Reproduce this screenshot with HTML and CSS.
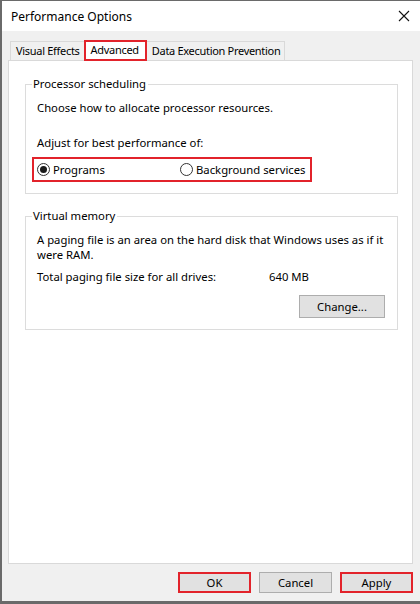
FILE: index.html
```html
<!DOCTYPE html>
<html>
<head>
<meta charset="utf-8">
<link rel="stylesheet" href="styles.css">
</head>
<body>
<div class="window">
  <div class="titlebar">
    <span class="title">Performance Options</span>
    <svg class="close" width="12" height="12" viewBox="0 0 12 12"><path d="M1 1 L11 11 M11 1 L1 11" stroke="#111" stroke-width="1.1" fill="none"/></svg>
  </div>
  <div class="client">
    <div class="tabs">
      <div class="tab">Visual Effects</div>
      <div class="tab active">Advanced</div>
      <div class="tab">Data Execution Prevention</div>
    </div>
    <div class="panel">
      <fieldset class="group g1">
        <legend>Processor scheduling</legend>
        <div class="gbody">
          <div class="line">Choose how to allocate processor resources.</div>
          <div class="line adjust">Adjust for best performance of:</div>
          <div class="radios">
            <label class="radio r1"><span class="dot checked"></span>Programs</label>
            <label class="radio r2"><span class="dot"></span>Background services</label>
          </div>
        </div>
      </fieldset>
      <fieldset class="group g2">
        <legend>Virtual memory</legend>
        <div class="gbody vm">
          <div class="para">A paging file is an area on the hard disk that Windows uses as if it<br>were RAM.</div>
          <div class="total"><span class="tlabel">Total paging file size for all drives:</span><span>640 MB</span></div>
          <div class="changerow"><div class="btn change">Change...</div></div>
        </div>
      </fieldset>
    </div>
    <div class="buttons">
      <div class="btn dlg marked">OK</div>
      <div class="btn dlg">Cancel</div>
      <div class="btn dlg marked">Apply</div>
    </div>
  </div>
</div>
</body>
</html>
```
FILE: styles.css
```css
* { box-sizing: border-box; }
html, body { margin: 0; padding: 0; }
body {
  width: 420px;
  height: 604px;
  overflow: hidden;
  font-family: "Noto Sans", "Open Sans", sans-serif;
  font-size: 11.3px;
  color: #000;
  background: #f0f0f0;
  white-space: nowrap;
}
.window {
  width: 420px;
  height: 604px;
  border-top: 1px solid #6a6a6a;
  border-left: 2px solid #6a6a6a;
  border-bottom: 3px solid #6a6a6a;
  display: flex;
  flex-direction: column;
  background: #f0f0f0;
}
.titlebar {
  height: 30px;
  background: #fff;
  display: flex;
  align-items: center;
  justify-content: space-between;
  padding: 2px 10px 0 9px;
  flex-shrink: 0;
}
.title { font-size: 12px; line-height: 16px; }
.close { display: block; margin-top: -2px; }
.client {
  flex: 1;
  display: flex;
  flex-direction: column;
  padding: 8px 7px 0 6px;
}
.tabs {
  display: flex;
  align-items: flex-end;
  height: 21px;
  padding-left: 2px;
  position: relative;
  z-index: 1;
}
.tab {
  height: 19px;
  border: 1px solid #d9d9d9;
  border-bottom: none;
  background: #f0f0f0;
  line-height: 18px;
  font-size: 11px;
  letter-spacing: -0.3px;
  padding: 0 4px 0 5px;
  margin-right: -1px;
}
.tab.active {
  height: 21px;
  background: #fff;
  border: 2px solid #e2232b;
  padding: 0 6px 0 5px;
  line-height: 16px;
  margin-bottom: -1px;
  position: relative;
  z-index: 2;
}
.panel {
  height: 504px;
  background: #fff;
  border: 1px solid #d9d9d9;
  padding: 0 14px 0 16px;
  display: flex;
  flex-direction: column;
}
.group {
  margin: 0;
  padding: 0;
  border: 1px solid #dcdcdc;
  min-width: 0;
}
.group legend {
  margin-left: 6px;
  padding: 0 2px 0 1px;
  line-height: 16px;
}
.g1 { margin-top: 15px; }
.g2 { margin-top: 14px; }
.gbody { padding: 8px 0 0 11px; }
.line { line-height: 16px; }
.adjust { margin-top: 19px; }
.radios {
  margin: 6px 0 11px -5px;
  width: 280px;
  height: 25px;
  border: 2px solid #e2232b;
  display: flex;
  align-items: center;
  padding-left: 3px;
}
.radio {
  display: flex;
  align-items: center;
  line-height: 16px;
}
.r1 { width: 143px; }
.dot {
  width: 13px;
  height: 13px;
  border: 1px solid #333;
  border-radius: 50%;
  margin-right: 3px;
  display: flex;
  align-items: center;
  justify-content: center;
  background: #fff;
}
.dot.checked::after {
  content: "";
  width: 7px;
  height: 7px;
  border-radius: 50%;
  background: #1a1a1a;
}
.vm { padding-top: 8px; }
.para { line-height: 15px; }
.total { margin-top: 7px; line-height: 16px; display: flex; }
.tlabel { width: 232px; }
.changerow {
  display: flex;
  justify-content: flex-end;
  padding: 10px 12px 11px 0;
}
.btn {
  background: #e1e1e1;
  border: 1px solid #adadad;
  display: flex;
  align-items: center;
  justify-content: center;
  line-height: 16px;
}
.change { width: 86px; height: 23px; }
.buttons {
  display: flex;
  justify-content: flex-end;
  gap: 8px;
  padding-top: 8px;
  padding-right: 0;
}
.dlg { width: 73px; height: 21px; }
.dlg.marked { border: 2px solid #e2232b; }
```
